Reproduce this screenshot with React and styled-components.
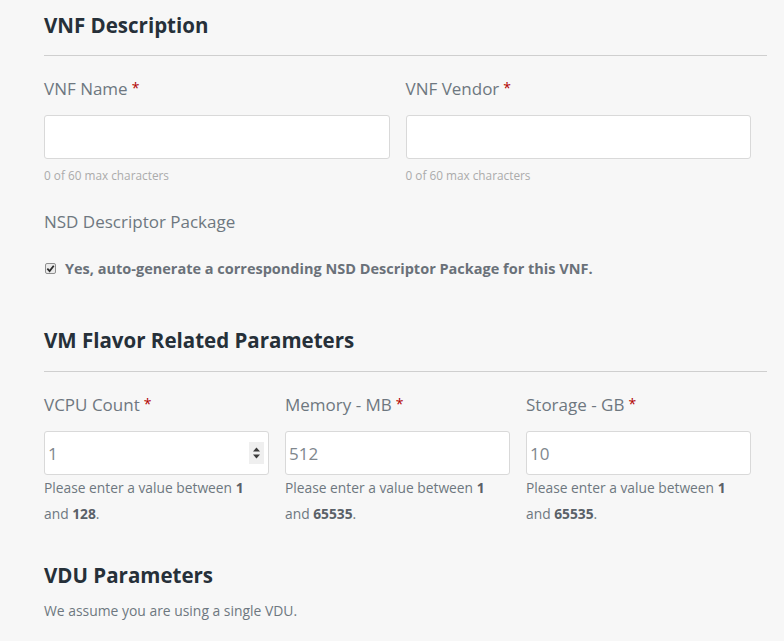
import React from "react";
import styled, { createGlobalStyle } from "styled-components";

const GlobalStyle = createGlobalStyle`
  html, body {
    margin: 0;
    padding: 0;
    background: #f7f7f7;
  }
  body {
    font-family: "Open Sans", "Lato", sans-serif;
    color: #6e7780;
  }
  * { box-sizing: border-box; }
`;

const Page = styled.div`
  width: 723px;
  margin-left: 44px;
  padding-top: 11px;
`;

const SectionTitle = styled.h2`
  margin: 0;
  font-size: 20.5px;
  line-height: 28px;
  font-weight: 700;
  color: #263039;
`;

const Divider = styled.hr`
  margin: ${(p) => p.$top || 16}px 0 20px;
  border: 0;
  border-top: 1px solid #cfcfcf;
`;

const Row = styled.div`
  width: 707px;
  display: grid;
  grid-template-columns: repeat(${(p) => p.$cols}, 1fr);
  column-gap: 16px;
`;

const Field = styled.div`
  display: flex;
  flex-direction: column;
`;

const Label = styled.label`
  font-size: 17px;
  line-height: 24px;
  color: #6e7780;
  margin-bottom: 14px;
`;

const Star = styled.span`
  color: #b20000;
  font-size: 14px;
  margin-left: 4px;
  vertical-align: 2px;
`;

const InputWrap = styled.div`
  position: relative;
`;

const Input = styled.input`
  width: 100%;
  height: 44px;
  border: 1px solid #d9d9d9;
  border-radius: 3px;
  background: #fff;
  padding: 0 3px;
  font-family: inherit;
  font-size: 17px;
  color: #80878e;
  outline: none;
`;

const Spinner = styled.div`
  position: absolute;
  right: 5px;
  top: 11px;
  width: 15px;
  height: 22px;
  background: #efefef;
  display: flex;
  align-items: center;
  justify-content: center;
`;

const Counter = styled.div`
  font-size: 11.8px;
  line-height: 14px;
  color: #ababab;
  margin-top: 9px;
`;

const Help = styled.div`
  font-size: 13.8px;
  line-height: 26px;
  color: #6e7780;
  b { font-weight: 700; color: #5a6168; }
`;

const SubLabel = styled.div`
  font-size: 17px;
  line-height: 24px;
  color: #6e7780;
  margin-top: 28px;
`;

const CheckRow = styled.label`
  display: flex;
  align-items: center;
  gap: 9px;
  margin-top: 25px;
  margin-left: 1px;
  font-size: 14.5px;
  font-weight: 700;
  color: #6a7179;
`;

const Box = styled.span`
  width: 11px;
  height: 11px;
  border: 1px solid #8f8f8f;
  border-radius: 2px;
  background: #ebebeb;
  display: flex;
  align-items: center;
  justify-content: center;
`;

const Section = styled.section`
  margin-top: ${(p) => p.$top}px;
`;

const Note = styled.p`
  margin: 12px 0 0;
  font-size: 13.9px;
  color: #6e7780;
`;

const Req = ({ children }) => (
  <Label>
    {children}
    <Star>*</Star>
  </Label>
);

const App = () => (
  <>
    <GlobalStyle />
    <Page>
      <SectionTitle>VNF Description</SectionTitle>
      <Divider $top={16} />
      <Row $cols={2}>
        <Field>
          <Req>VNF Name</Req>
          <Input type="text" />
          <Counter>0 of 60 max characters</Counter>
        </Field>
        <Field>
          <Req>VNF Vendor</Req>
          <Input type="text" />
          <Counter>0 of 60 max characters</Counter>
        </Field>
      </Row>
      <SubLabel>NSD Descriptor Package</SubLabel>
      <CheckRow>
        <Box>
          <svg width="9" height="9" viewBox="0 0 10 10">
            <path d="M1.5 5.2 L4 7.8 L8.6 2" fill="none" stroke="#2b2b2b" strokeWidth="2" />
          </svg>
        </Box>
        Yes, auto-generate a corresponding NSD Descriptor Package for this VNF.
      </CheckRow>

      <Section $top={48}>
        <SectionTitle>VM Flavor Related Parameters</SectionTitle>
        <Divider $top={17} />
        <Row $cols={3}>
          <Field>
            <Req>VCPU Count</Req>
            <InputWrap>
              <Input type="text" defaultValue="1" />
              <Spinner>
                <svg width="9" height="16" viewBox="0 0 9 16">
                  <path d="M4.5 2.5 L8 6.5 L1 6.5 Z" fill="#3a3a3a" />
                  <path d="M4.5 13.5 L8 9.5 L1 9.5 Z" fill="#3a3a3a" />
                </svg>
              </Spinner>
            </InputWrap>
            <Help>
              Please enter a value between <b>1</b>
              <br />
              and <b>128</b>.
            </Help>
          </Field>
          <Field>
            <Req>Memory - MB</Req>
            <Input type="text" defaultValue="512" />
            <Help>
              Please enter a value between <b>1</b>
              <br />
              and <b>65535</b>.
            </Help>
          </Field>
          <Field>
            <Req>Storage - GB</Req>
            <Input type="text" defaultValue="10" />
            <Help>
              Please enter a value between <b>1</b>
              <br />
              and <b>65535</b>.
            </Help>
          </Field>
        </Row>
      </Section>

      <Section $top={34}>
        <SectionTitle>VDU Parameters</SectionTitle>
        <Note>We assume you are using a single VDU.</Note>
      </Section>
    </Page>
  </>
);

export default App;
